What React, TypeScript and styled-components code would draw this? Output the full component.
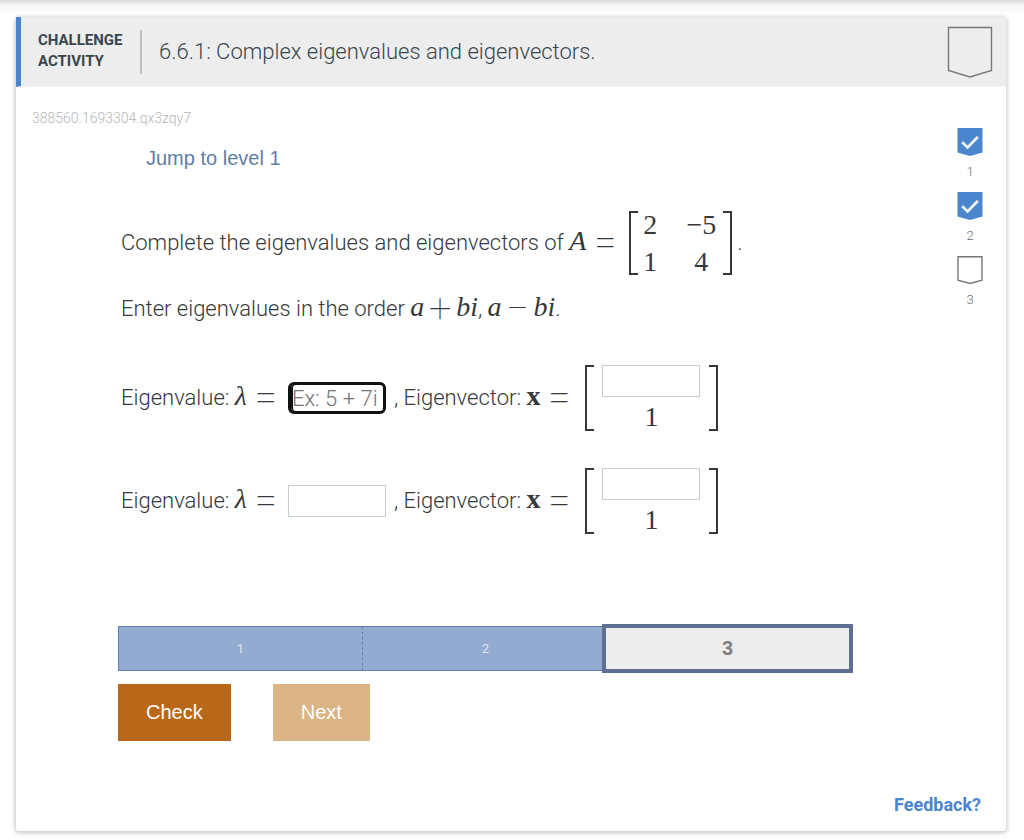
import React from "react";
import styled, { createGlobalStyle } from "styled-components";

const GlobalStyle = createGlobalStyle`
  *, *::before, *::after { box-sizing: border-box; }
  body {
    margin: 0;
    background: #fff linear-gradient(#dadada, #f4f4f4 5px, #fff 14px) no-repeat 0 0 / 100% 14px;
    color: #37383a;
    font-family: Roboto, sans-serif;
  }
`;

const Card = styled.section`
  margin: 17px 18px 8px 16px;
  background: #fff;
  border-radius: 3px;
  box-shadow: 0 1px 4px 1px rgba(0, 0, 0, 0.22);
`;

const Header = styled.header`
  display: flex;
  align-items: center;
  height: 70px;
  padding: 0 13px 0 17px;
  border-left: 5px solid #4a86cf;
  border-bottom: 1px solid #f4f4f4;
  border-top-right-radius: 3px;
  background: #ededed;
`;

const Kind = styled.div`
  width: 104px;
  padding: 0 0 2px;
  border-right: 2px solid #bdbdbd;
  color: #37474f;
  font-size: 15px;
  font-weight: 700;
  line-height: 21px;
`;

const Title = styled.h1`
  flex: 1;
  margin: 0 0 0 17px;
  color: #37474f;
  font-size: 22px;
  font-weight: 300;
`;

const Body = styled.div`
  display: flex;
`;

const Main = styled.main`
  flex: 1;
  padding: 21px 81px 0 102px;
`;

const ActivityId = styled.div`
  margin-left: -86px;
  color: #b5b5b5;
  font-size: 14px;
  font-weight: 300;
  line-height: 20px;
`;

const JumpButton = styled.button`
  display: block;
  margin: 16px 0 0 28px;
  padding: 0;
  border: 0;
  background: none;
  color: #607da8;
  font: 20px/28px "Liberation Sans", sans-serif;
`;

const Row = styled.div<{ $top: number }>`
  display: flex;
  align-items: center;
  margin: ${(p) => p.$top}px 0 0 3px;
  font-size: 22px;
  font-weight: 300;
  line-height: 32px;
  white-space: pre;
`;

const Formula = styled.span<{ $bold?: boolean; $upright?: boolean }>`
  font-family: "Liberation Serif", serif;
  font-size: 28px;
  font-style: ${(p) => (p.$upright ? "normal" : "italic")};
  font-weight: ${(p) => (p.$bold ? 700 : 400)};
  line-height: 28px;
`;

const Operator = styled.span<{ $binary?: boolean }>`
  display: flex;
  justify-content: center;
  width: 20px;
  margin: 0 ${(p) => (p.$binary ? 6 : 9)}px;
  font: 100 40px/32px Roboto, sans-serif;
`;

const Bracket = styled.span<{ $side: "left" | "right" }>`
  align-self: stretch;
  width: 9px;
  border: 2px solid #37383a;
  border-${(p) => (p.$side === "left" ? "right" : "left")}: 0;
`;

const MatrixBox = styled.span`
  display: flex;
  height: 64px;
  margin: 0 5px;
`;

const Cells = styled.span`
  display: grid;
  grid-template-columns: 14px 32px;
  grid-auto-rows: 37px;
  column-gap: 28px;
  align-content: center;
  align-items: center;
  justify-items: center;
  padding: 0 6px 0 5px;
`;

const Vector = styled.span`
  display: flex;
  height: 66px;
  margin-left: 7px;
`;

const VectorCells = styled.span`
  display: flex;
  flex-direction: column;
  align-items: center;
  gap: 6px;
  padding: 0 9px 0 8px;
`;

const Answer = styled.input<{ $active?: boolean }>`
  flex: none;
  width: 98px;
  height: 32px;
  padding: 0 0 0 ${(p) => (p.$active ? 1 : 4)}px;
  border: ${(p) => (p.$active ? "3px solid #111" : "1px solid #c3ced4")};
  border-radius: ${(p) => (p.$active ? 6 : 0)}px;
  box-shadow: ${(p) => (p.$active ? "inset 2px 0 #111" : "none")};
  background: #fff;
  outline: none;
  color: #37383a;
  font: 300 22px/26px Roboto, sans-serif;
  &::placeholder { color: #757575; opacity: 1; }
`;

const InlineAnswer = styled(Answer)`
  margin: 0 8px 0 3px;
`;

const Progress = styled.ol`
  display: grid;
  grid-template-columns: repeat(3, 1fr);
  align-items: center;
  margin: 90px 0 0;
  padding: 0;
  list-style: none;
`;

const Step = styled.li<{ $first?: boolean }>`
  height: 45px;
  border: 1px solid #6280ab;
  border-width: 1px 0 1px ${(p) => (p.$first ? 1 : 0)}px;
  border-right: ${(p) => (p.$first ? "1px dashed #6280ab" : 0)};
  background: #92abd0;
  color: #dfe7f1;
  font: 13px/43px Roboto, sans-serif;
  text-align: center;
`;

const CurrentStep = styled.li`
  height: 49px;
  margin-left: -6px;
  border: 4px solid #5e7091;
  background: #ededed;
  color: #808080;
  font: 700 20px/40px "Liberation Sans", sans-serif;
  text-align: center;
`;

const Actions = styled.div`
  display: flex;
  gap: 42px;
  margin-top: 11px;
`;

const ActionButton = styled.button<{ $muted?: boolean }>`
  height: 57px;
  padding: 0 28px 2px;
  border: 0;
  background: ${(p) => (p.$muted ? "#dab484" : "#b96819")};
  color: #fff;
  font: 20px/24px "Liberation Sans", sans-serif;
`;

const Levels = styled.ol`
  display: flex;
  flex-direction: column;
  gap: 10px;
  width: 72px;
  margin: 0;
  padding: 41px 0 0;
  list-style: none;
`;

const Level = styled.li`
  display: flex;
  flex-direction: column;
  align-items: center;
  gap: 6px;
  color: #6a6f75;
  font-size: 13px;
  font-weight: 300;
  line-height: 20px;
  svg { display: block; }
`;

const Footer = styled.footer`
  display: flex;
  justify-content: flex-end;
  padding: 52px 25px 15px;
`;

const Feedback = styled.a`
  color: #4a86cf;
  font-size: 18px;
  font-weight: 700;
  line-height: 23px;
  text-decoration: none;
`;

function LevelBadge({ done }: { done: boolean }) {
  return (
    <svg width="26" height="28" viewBox="0 0 26 28" role="img" aria-label={done ? "Completed" : "Not completed"}>
      {done ? (
        <>
          <path d="M.5 0h25v24.5L13 28 .5 24.5z" fill="#4a86cf" />
          <path d="M5.2 14.2l5.4 5.2L20.8 9" fill="none" stroke="#fff" strokeWidth="2.6" />
        </>
      ) : (
        <path d="M1 .8h24v23.4L13 27.5 1 24.2z" fill="#fff" stroke="#777" strokeWidth="1.4" />
      )}
    </svg>
  );
}

function EigenRow({ index, top, active }: { index: number; top: number; active?: boolean }) {
  return (
    <Row $top={top}>
      <label htmlFor={`value-${index}`}>Eigenvalue: <Formula>λ</Formula></label>
      <Operator>=</Operator>
      <InlineAnswer id={`value-${index}`} type="text" $active={active} placeholder={active ? "Ex: 5 + 7i" : undefined} />
      <label htmlFor={`vector-${index}`}>, Eigenvector: <Formula $bold $upright>x</Formula></label>
      <Operator>=</Operator>
      <Vector>
        <Bracket $side="left" />
        <VectorCells>
          <Answer id={`vector-${index}`} type="text" />
          <Formula $upright>1</Formula>
        </VectorCells>
        <Bracket $side="right" />
      </Vector>
    </Row>
  );
}

export default function App() {
  return (
    <>
      <GlobalStyle />
      <Card>
        <Header>
          <Kind>CHALLENGE<br />ACTIVITY</Kind>
          <Title>6.6.1: Complex eigenvalues and eigenvectors.</Title>
          <svg width="46" height="52" viewBox="0 0 46 52" role="img" aria-label="Activity not completed">
            <path d="M1.5 1.5h43v43L23 51 1.5 44.5z" fill="none" stroke="#777" strokeWidth="1.4" />
          </svg>
        </Header>
        <Body>
          <Main>
            <ActivityId>388560.1693304.qx3zqy7</ActivityId>
            <JumpButton type="button">Jump to level 1</JumpButton>
            <Row $top={39}>
              <span>Complete the eigenvalues and eigenvectors of <Formula>A</Formula></span>
              <Operator>=</Operator>
              <MatrixBox>
                <Bracket $side="left" />
                <Cells>
                  <Formula $upright>2</Formula>
                  <Formula $upright>−5</Formula>
                  <Formula $upright>1</Formula>
                  <Formula $upright>4</Formula>
                </Cells>
                <Bracket $side="right" />
              </MatrixBox>
              <span>.</span>
            </Row>
            <Row $top={18}>
              <span>Enter eigenvalues in the order <Formula>a</Formula></span>
              <Operator $binary>+</Operator>
              <span><Formula>bi</Formula>, <Formula>a</Formula></span>
              <Operator $binary>−</Operator>
              <span><Formula>bi</Formula>.</span>
            </Row>
            <EigenRow index={1} top={40} active />
            <EigenRow index={2} top={37} />
            <Progress>
              <Step $first>1</Step>
              <Step>2</Step>
              <CurrentStep aria-current="step">3</CurrentStep>
            </Progress>
            <Actions>
              <ActionButton type="button">Check</ActionButton>
              <ActionButton type="button" $muted>Next</ActionButton>
            </Actions>
          </Main>
          <Levels>
            <Level><LevelBadge done />1</Level>
            <Level><LevelBadge done />2</Level>
            <Level><LevelBadge done={false} />3</Level>
          </Levels>
        </Body>
        <Footer>
          <Feedback href="#feedback">Feedback?</Feedback>
        </Footer>
      </Card>
    </>
  );
}
